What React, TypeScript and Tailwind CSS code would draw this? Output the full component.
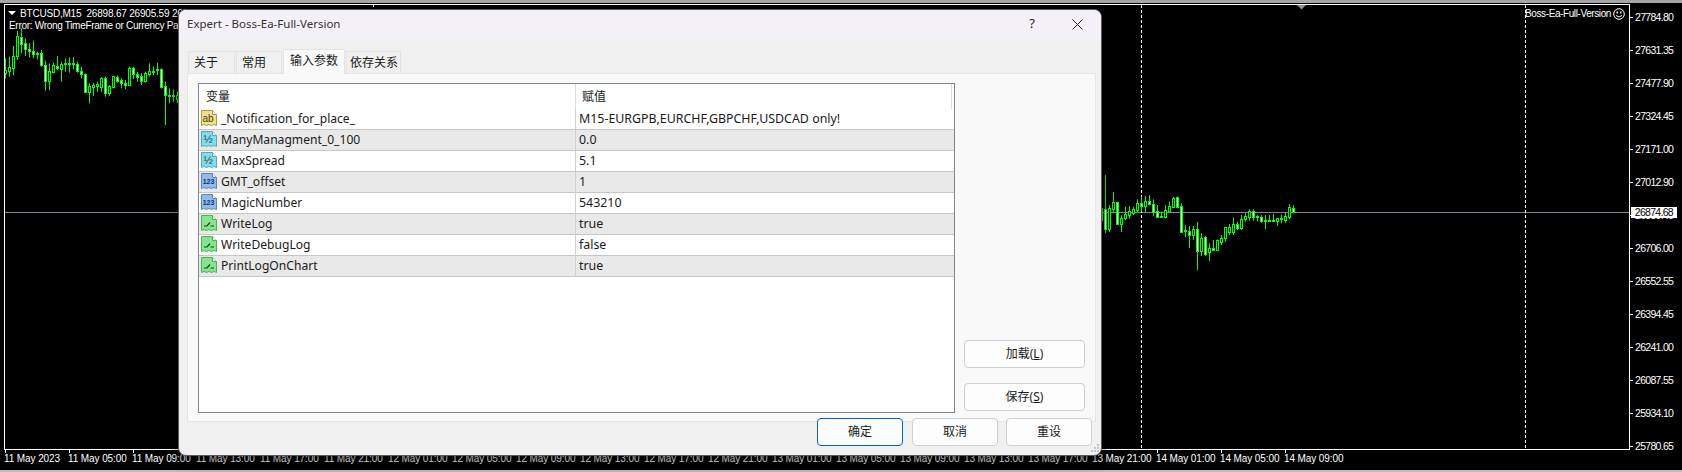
import React from "react";

// [x, high, bodyTop, bodyBottom, low, filled] in 3x zoom pixels
type Candle = [number, number, number, number, number, number];

const leftCandles: Candle[] = [
  [16, 115, 150, 160, 175, 0], [28, 110, 142, 152, 170, 0], [40, 78, 108, 143, 165, 0], [52, 33, 48, 108, 120, 0],
  [64, 25, 52, 72, 100, 1], [76, 55, 70, 87, 108, 1], [88, 70, 88, 94, 112, 1], [100, 62, 93, 101, 115, 1],
  [112, 95, 99, 101, 118, 0], [124, 90, 100, 134, 140, 1], [136, 122, 136, 182, 212, 1], [148, 130, 153, 182, 210, 0],
  [160, 128, 136, 155, 160, 0], [172, 108, 137, 143, 150, 1], [184, 125, 133, 146, 185, 0], [196, 115, 128, 133, 155, 0],
  [208, 112, 128, 130, 158, 0], [220, 112, 130, 132, 148, 1], [232, 125, 132, 152, 158, 1], [244, 140, 152, 163, 175, 1],
  [256, 160, 163, 215, 218, 1], [268, 190, 198, 215, 250, 0], [280, 188, 194, 202, 228, 0], [292, 185, 192, 199, 215, 0],
  [304, 172, 175, 200, 215, 0], [316, 170, 174, 218, 230, 1], [328, 195, 199, 218, 228, 0], [340, 168, 169, 200, 205, 0],
  [352, 166, 170, 182, 188, 1], [364, 175, 180, 188, 205, 1], [376, 180, 190, 194, 207, 1], [388, 140, 145, 194, 195, 0],
  [400, 140, 145, 163, 178, 1], [412, 155, 163, 170, 185, 1], [424, 160, 169, 183, 195, 1], [436, 155, 159, 183, 187, 0],
  [448, 130, 153, 161, 170, 0], [460, 140, 152, 155, 165, 1], [472, 128, 148, 151, 165, 1], [484, 145, 148, 200, 205, 1],
  [496, 185, 199, 226, 315, 1], [508, 205, 226, 227, 250, 0], [520, 208, 226, 227, 245, 0], [532, 215, 226, 238, 250, 0],
];

const rightCandles: Candle[] = [
  [244, 165, 175, 210, 215, 0], [256, 75, 178, 236, 250, 1], [268, 165, 175, 236, 246, 0], [280, 126, 156, 178, 190, 0],
  [292, 155, 157, 222, 225, 1], [304, 195, 203, 222, 246, 0], [316, 170, 192, 204, 210, 0], [328, 168, 184, 195, 207, 0],
  [340, 170, 178, 188, 195, 0], [352, 148, 160, 180, 190, 0], [364, 140, 160, 168, 185, 1], [376, 138, 153, 167, 188, 0],
  [388, 135, 153, 162, 165, 1], [400, 148, 163, 187, 198, 1], [412, 165, 183, 200, 204, 1], [424, 185, 197, 200, 204, 1],
  [436, 165, 180, 202, 205, 0], [448, 155, 168, 183, 185, 0], [460, 140, 143, 170, 172, 0], [472, 140, 142, 170, 175, 1],
  [484, 160, 168, 245, 245, 1], [496, 226, 241, 242, 262, 1], [508, 228, 244, 254, 294, 1], [520, 228, 238, 255, 270, 0],
  [532, 216, 238, 302, 360, 1], [544, 250, 264, 303, 318, 0], [556, 258, 262, 312, 318, 1], [568, 280, 294, 305, 333, 0],
  [580, 270, 295, 300, 303, 1], [592, 268, 270, 300, 300, 0], [604, 255, 264, 275, 285, 0], [616, 232, 232, 265, 275, 0],
  [628, 222, 232, 245, 255, 0], [640, 202, 222, 245, 255, 0], [652, 215, 222, 233, 240, 1], [664, 195, 208, 233, 240, 0],
  [676, 190, 198, 208, 215, 0], [688, 178, 184, 200, 212, 0], [700, 178, 184, 200, 212, 1], [712, 196, 198, 199, 214, 1],
  [724, 195, 200, 213, 218, 1], [736, 195, 210, 212, 237, 1], [748, 195, 210, 212, 214, 1], [760, 192, 210, 212, 215, 1],
  [772, 204, 205, 212, 228, 0], [784, 193, 205, 208, 220, 0], [796, 188, 197, 210, 218, 0], [808, 163, 170, 200, 208, 0],
  [820, 166, 174, 187, 190, 1],
];

const prices = [
  "27784.80", "27631.35", "27477.90", "27324.45", "27171.00", "27012.90", "26859.45",
  "26706.00", "26552.55", "26394.45", "26241.00", "26087.55", "25934.10", "25780.65",
];

const times = [
  "11 May 2023", "11 May 05:00", "11 May 09:00", "11 May 13:00", "11 May 17:00", "11 May 21:00",
  "12 May 01:00", "12 May 05:00", "12 May 09:00", "12 May 13:00", "12 May 17:00", "12 May 21:00",
  "13 May 01:00", "13 May 05:00", "13 May 09:00", "13 May 13:00", "13 May 17:00", "13 May 21:00",
  "14 May 01:00", "14 May 05:00", "14 May 09:00",
];

type Kind = "text" | "double" | "int" | "bool";

const params: { name: string; value: string; kind: Kind }[] = [
  { name: "_Notification_for_place_", value: "M15-EURGPB,EURCHF,GBPCHF,USDCAD only!", kind: "text" },
  { name: "ManyManagment_0_100", value: "0.0", kind: "double" },
  { name: "MaxSpread", value: "5.1", kind: "double" },
  { name: "GMT_offset", value: "1", kind: "int" },
  { name: "MagicNumber", value: "543210", kind: "int" },
  { name: "WriteLog", value: "true", kind: "bool" },
  { name: "WriteDebugLog", value: "false", kind: "bool" },
  { name: "PrintLogOnChart", value: "true", kind: "bool" },
];

const iconColors: Record<Kind, { fill: string; edge: string; ink: string; label: string }> = {
  text: { fill: "#eee08c", edge: "#a8994e", ink: "#4a3f08", label: "ab" },
  double: { fill: "#86dbe8", edge: "#55a9bb", ink: "#124a5c", label: "½" },
  int: { fill: "#92bbec", edge: "#5a86bd", ink: "#0f3468", label: "123" },
  bool: { fill: "#86e48e", edge: "#4fae58", ink: "#0d4a16", label: "" },
};

function ParamIcon({ kind }: { kind: Kind }) {
  const c = iconColors[kind];
  return (
    <svg width="16" height="17" viewBox="0 0 16 17" className="shrink-0">
      <path d="M0.5 0.5 H11.5 L15.5 4.5 V15.5 L13 14.5 L10.5 15.5 L8 14.5 L5.5 15.5 L3 14.5 L0.5 15.5 Z" fill={c.fill} stroke={c.edge} />
      <path d="M11.5 0.5 V4.5 H15.5" fill="#ffffff" stroke={c.edge} />
      {kind === "bool" ? (
        <path d="M3 11 H6 L9 7.5 M9.5 11 H13" fill="none" stroke={c.ink} strokeWidth="1.2" />
      ) : (
        <text
          x={kind === "int" ? 7.5 : 7}
          y={kind === "int" ? 11 : 11.5}
          textAnchor="middle"
          fontSize={kind === "int" ? 7 : kind === "text" ? 10 : 11}
          fontWeight={kind === "int" ? 700 : 400}
          fill={c.ink}
          fontFamily="Liberation Sans, sans-serif"
        >
          {c.label}
        </text>
      )}
    </svg>
  );
}

function Candles({ data, ox, oy }: { data: Candle[]; ox: number; oy: number }) {
  return (
    <>
      {data.map(([x, hi, top, bot, lo, filled]) => {
        const cx = Math.floor(ox + x / 3) + 0.5;
        const t = Math.round(oy + top / 3) + 0.5;
        const b = Math.round(oy + bot / 3) + 0.5;
        return (
          <g key={x}>
            <line x1={cx} x2={cx} y1={oy + hi / 3} y2={oy + lo / 3} stroke="#00ff00" />
            <rect x={cx - 1} y={t} width="2" height={Math.max(b - t, 1)} fill={filled ? "#ffffff" : "#000000"} stroke="#00ff00" />
          </g>
        );
      })}
    </>
  );
}

function DlgButton({ children, primary, className }: { children: React.ReactNode; primary?: boolean; className?: string }) {
  return (
    <div
      className={`flex h-[28px] items-center justify-center rounded-[4px] bg-[#fdfdfd] text-[12px] text-[#1a1a1a] ${
        primary ? "border-[1.5px] border-[#0067c0]" : "border border-[#d0d0d0]"
      } ${className ?? ""}`}
    >
      {children}
    </div>
  );
}

const tabClass = "flex h-[22px] items-center border border-b-0 border-[#e3e3e3] bg-[#f0f0f0] text-[12px] text-[#1a1a1a]";

export default function App() {
  return (
    <div className="relative flex h-[472px] w-[1682px] flex-col overflow-hidden bg-black font-['Liberation_Sans',sans-serif] text-[10px] text-white">
      <div className="h-[3px] shrink-0 bg-[#a6a6a6]" />
      <div className="flex h-[1px] shrink-0 bg-black" />

      {/* chart + price axis */}
      <div className="flex h-[446px] shrink-0 pl-[4px]">
        <div className="relative h-[446px] w-[1626px] border border-white">
          <svg width="1624" height="444" viewBox="5 5 1624 444" className="absolute left-0 top-0">
            <line x1="5" x2="1629" y1="212.5" y2="212.5" stroke="#778899" />
            <line x1="1141.5" x2="1141.5" y1="5" y2="449" stroke="#ffffff" strokeDasharray="3 2" />
            <line x1="1525.5" x2="1525.5" y1="5" y2="449" stroke="#ffffff" strokeDasharray="3 2" />
            <line x1="373.5" x2="373.5" y1="5" y2="7" stroke="#ffffff" />
            <polygon points="1297,5 1306,5 1301.5,9.5" fill="#8c94a0" />
            <Candles data={leftCandles} ox={0} oy={20} />
            <Candles data={rightCandles} ox={1020} oy={150} />
          </svg>
          <div className="absolute left-[3px] top-[1px] flex h-[14px] items-center gap-[4px] whitespace-nowrap tracking-[-0.2px]">
            <svg width="8" height="4" viewBox="0 0 8 4"><polygon points="0,0 8,0 4,4" fill="#ffffff" /></svg>
            <span>BTCUSD,M15&nbsp; 26898.67 26905.59 26859.35 26874.68</span>
          </div>
          <div className="absolute left-[4px] top-[13px] whitespace-nowrap tracking-[-0.3px]">Error: Wrong TimeFrame or Currency Pair!</div>
          <div className="absolute right-[2px] top-[1px] flex items-center gap-[2px] whitespace-nowrap tracking-[-0.4px]">
            <span>Boss-Ea-Full-Version</span>
            <svg width="12" height="12" viewBox="0 0 12 12" className="mr-[2px]">
              <circle cx="6" cy="6" r="5.3" fill="none" stroke="#ffffff" />
              <rect x="3.5" y="3.5" width="1.4" height="2" fill="#ffffff" />
              <rect x="7.1" y="3.5" width="1.4" height="2" fill="#ffffff" />
              <path d="M3 7.5 Q6 10.5 9 7.5" fill="none" stroke="#ffffff" />
            </svg>
          </div>
        </div>

        <div className="relative -mt-[3px] flex flex-1 flex-col">
          {prices.map((p) => (
            <div key={p} className="flex h-[33px] shrink-0 items-center text-[10.5px] leading-none">
              <div className="h-px w-[3px] bg-white" />
              <span className="ml-[2px] tracking-[-0.7px]">{p}</span>
            </div>
          ))}
          <div className="absolute left-[1px] top-[206px] flex h-[11px] w-[46px] items-center justify-end bg-white pr-[4px] text-[10.5px] leading-none tracking-[-0.7px] text-black">
            26874.68
          </div>
        </div>
      </div>

      {/* time axis */}
      <div className="flex shrink-0 pl-[5px]">
        {times.map((t) => (
          <div key={t} className="flex w-[64px] shrink-0 flex-col">
            <div className="h-[3px] w-px bg-white" />
            <span className="-ml-[1px] whitespace-nowrap leading-[12px] tracking-[-0.1px]">{t}</span>
          </div>
        ))}
      </div>

      <div className="absolute bottom-0 left-0 h-[2px] w-full bg-[#bdbdbd]" />

      {/* Expert dialog */}
      <div className="absolute left-[178px] top-[9px] flex h-[447px] w-[924px] flex-col overflow-hidden rounded-[8px] border border-[#5a5a5a] bg-[#f0f0f0] font-['Noto_Sans','Noto_Sans_CJK_SC',sans-serif] text-[12px] text-[#1a1a1a] shadow-[0_6px_14px_rgba(0,0,0,0.45)]">
        <div className="flex h-[30px] shrink-0 items-center bg-[#f3f0f8] pb-[2px] pl-[8px]">
          <span className="text-[11.5px] text-[#333333]">Expert - Boss-Ea-Full-Version</span>
          <span className="ml-auto text-[13px] text-[#222222]">?</span>
          <svg width="11" height="11" viewBox="0 0 11 11" className="ml-[37px] mr-[18px]">
            <path d="M0.5 0.5 L10.5 10.5 M10.5 0.5 L0.5 10.5" stroke="#222222" fill="none" />
          </svg>
        </div>

        <div className="flex h-[33px] shrink-0 items-end pl-[9px]">
          <div className={`${tabClass} w-[47px] pl-[5px]`}>关于</div>
          <div className={`${tabClass} ml-[1px] w-[46px] pl-[5px]`}>常用</div>
          <div className="z-10 -mb-px ml-[1px] flex h-[25px] w-[62px] items-center border border-b-0 border-[#e3e3e3] bg-[#f9f9f9] pb-[2px] pl-[6px] text-[12px]">输入参数</div>
          <div className={`${tabClass} ml-[1px] w-[55px] pl-[3px]`}>依存关系</div>
        </div>

        <div className="mx-[8px] mr-[5px] flex h-[349px] shrink-0 gap-[9px] border border-[#e5e5e5] bg-[#f9f9f9] pb-[8px] pl-[10px] pt-[9px]">
          <div className="flex h-[330px] w-[757px] shrink-0 flex-col border border-[#808690] bg-white">
            <div className="flex h-[25px] shrink-0 items-center">
              <div className="w-[376px] pl-[7px]">变量</div>
              <div className="flex h-full flex-1 items-center border-l border-[#dddddd] pl-[6px]">
                赋值
                <div className="ml-auto h-full w-px bg-[#dddddd]" />
                <div className="w-[2px]" />
              </div>
            </div>
            {params.map((p, i) => (
              <div key={p.name} className={`flex h-[21px] shrink-0 items-center border-b border-[#c6c6c6] ${i % 2 === 1 ? "bg-[#e9e9e9]" : "bg-white"}`}>
                <div className="flex w-[376px] items-center gap-[4px] pl-[2px] text-[12.1px]">
                  <ParamIcon kind={p.kind} />
                  <span>{p.name}</span>
                </div>
                <div className="flex h-full flex-1 items-center border-l border-[#d0d0d0] pl-[3px] text-[12.4px]">{p.value}</div>
              </div>
            ))}
          </div>
          <div className="flex w-[121px] shrink-0 flex-col justify-end gap-[15px] pb-[2px]">
            <DlgButton>
              加载(<u>L</u>)
            </DlgButton>
            <DlgButton>
              保存(<u>S</u>)
            </DlgButton>
          </div>
        </div>

        <div className="z-10 -mt-[4px] flex shrink-0 justify-end pr-[9px]">
          <DlgButton primary className="w-[86px]">确定</DlgButton>
          <DlgButton className="ml-[9px] w-[86px]">取消</DlgButton>
          <DlgButton className="ml-[8px] w-[86px]">重设</DlgButton>
        </div>

        <svg width="9" height="9" viewBox="0 0 9 9" className="absolute bottom-[2px] right-[1px]">
          <g fill="#c4c4c4">
            <rect x="6" y="0" width="2" height="2" />
            <rect x="3" y="3" width="2" height="2" />
            <rect x="6" y="3" width="2" height="2" />
            <rect x="0" y="6" width="2" height="2" />
            <rect x="3" y="6" width="2" height="2" />
            <rect x="6" y="6" width="2" height="2" />
          </g>
        </svg>
      </div>
    </div>
  );
}
